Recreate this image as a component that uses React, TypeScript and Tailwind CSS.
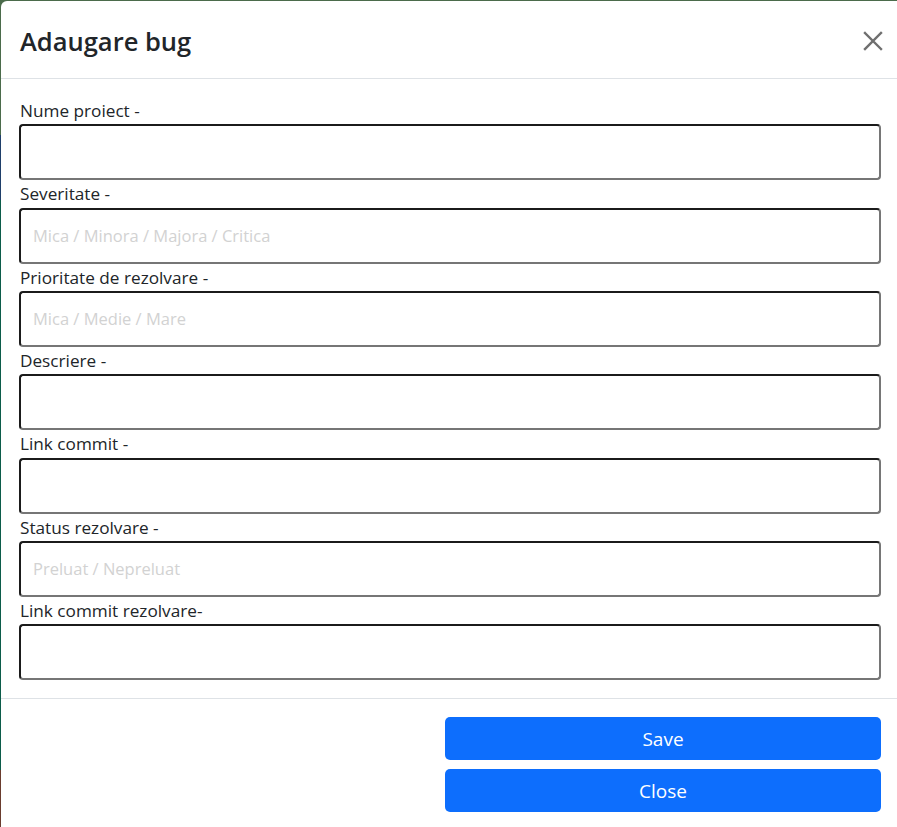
const fields = [
  { label: "Nume proiect -", placeholder: "" },
  { label: "Severitate -", placeholder: "Mica / Minora / Majora / Critica" },
  { label: "Prioritate de rezolvare -", placeholder: "Mica / Medie / Mare" },
  { label: "Descriere -", placeholder: "" },
  { label: "Link commit -", placeholder: "" },
  { label: "Status rezolvare -", placeholder: "Preluat / Nepreluat" },
  { label: "Link commit rezolvare-", placeholder: "" },
];

function CloseIcon() {
  return (
    <svg width="20" height="20" viewBox="0 0 20 20" className="text-[#6f6f6f]">
      <path d="M2 2 L18 18 M18 2 L2 18" stroke="currentColor" strokeWidth="2.4" strokeLinecap="square" />
    </svg>
  );
}

export default function App() {
  return (
    <div
      className="w-[897px] h-[827px] overflow-hidden pl-px pt-px bg-[linear-gradient(to_bottom,#4b6b4b_0px,#4b6b4b_135px,#1f3f6a_135px,#1f3f6a_200px,#0c5c4a_200px,#0c5c4a_770px,#6a3c2e_770px)]"
      style={{ fontFamily: '"Segoe UI", "Open Sans", "Noto Sans", sans-serif' }}
    >
      <div className="w-[910px] h-[840px] bg-white rounded-tl-[6px] flex flex-col text-[#212529]">
        <div className="h-[78px] flex items-center justify-between pl-[19px] pr-[29px] border-b border-[#dee2e6]">
          <h5 className="text-[25.5px] font-semibold leading-[30px] mt-[3px]">Adaugare bug</h5>
          <button className="w-[20px] h-[20px] mt-[2px] -mr-[1px]">
            <CloseIcon />
          </button>
        </div>
        <div className="pt-[18px] pb-[18px] pl-[18px] flex flex-col border-b border-[#dee2e6]">
          {fields.map((f) => (
            <div key={f.label} className="flex flex-col">
              <label className="text-[17.2px] leading-[27.33px] pl-px text-[#212529]">{f.label}</label>
              <input
                type="text"
                placeholder={f.placeholder}
                className="w-[862px] h-[56px] px-[12px] text-[16.5px] rounded-[4px] border-2 border-t-[#1b1b1b] border-l-[#1b1b1b] border-r-[#767676] border-b-[#767676] placeholder:text-[#d2d2d2] outline-none"
              />
            </div>
          ))}
        </div>
        <div className="pt-[18px] pl-[444px] flex flex-col gap-[9px]">
          <button className="w-[436px] h-[43px] rounded-[5px] bg-[#0d6efd] text-white text-[19px]">Save</button>
          <button className="w-[436px] h-[43px] rounded-[5px] bg-[#0d6efd] text-white text-[19px]">Close</button>
        </div>
      </div>
    </div>
  );
}
